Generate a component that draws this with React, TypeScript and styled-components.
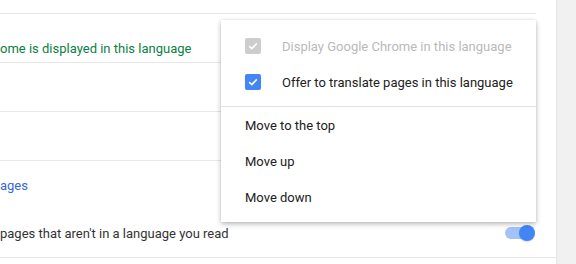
import React from "react";
import styled, { createGlobalStyle } from "styled-components";

const Global = createGlobalStyle`
  html, body { margin: 0; padding: 0; }
  *, *::before, *::after { box-sizing: border-box; }
  body {
    width: 576px;
    height: 264px;
    overflow: hidden;
    background: #f1f1f1;
    font-family: Roboto, "Liberation Sans", Arial, sans-serif;
    font-size: 13px;
    color: #333;
  }
`;

const Page = styled.div`
  display: flex;
  width: 576px;
  height: 264px;
  position: relative;
`;

const Card = styled.div`
  width: 556px;
  height: 264px;
  background: #fff;
  box-shadow: 1px 0 2px rgba(0, 0, 0, 0.06);
  display: flex;
  flex-direction: column;
`;

const Row = styled.div<{ $h: number; $line?: boolean; $full?: boolean; $align?: string }>`
  height: ${(p) => p.$h}px;
  display: flex;
  align-items: ${(p) => p.$align || "center"};
  margin-right: ${(p) => (p.$full ? 0 : 20)}px;
  border-bottom: ${(p) => (p.$line ? "1px solid #e6e6e6" : "none")};
  flex-shrink: 0;
`;

const RowText = styled.span<{ $color?: string; $pb?: number }>`
  color: ${(p) => p.$color || "#333"};
  white-space: nowrap;
  flex: 1;
  padding-bottom: ${(p) => p.$pb || 0}px;
`;

const Toggle = styled.div`
  position: relative;
  width: 30px;
  height: 16px;
  margin-right: 21px;
  flex-shrink: 0;
`;

const Track = styled.div`
  position: absolute;
  left: 0;
  top: 2px;
  width: 26px;
  height: 12px;
  border-radius: 6px;
  background: #a3c2f9;
`;

const Knob = styled.div`
  position: absolute;
  right: 0;
  top: 0;
  width: 16px;
  height: 16px;
  border-radius: 50%;
  background: #4285f4;
  box-shadow: 0 1px 1px rgba(0, 0, 0, 0.15);
`;

const Menu = styled.div`
  position: absolute;
  left: 221px;
  top: 20px;
  width: 315px;
  padding: 8px 0 7px;
  background: #fff;
  box-shadow: 0 2px 5px rgba(0, 0, 0, 0.28), 0 0 2px rgba(0, 0, 0, 0.08);
  display: flex;
  flex-direction: column;
`;

const Item = styled.div<{ $disabled?: boolean }>`
  height: 36px;
  display: flex;
  align-items: center;
  padding-left: 24px;
  color: ${(p) => (p.$disabled ? "#bababa" : "#212121")};
  white-space: nowrap;
`;

const Box = styled.span<{ $disabled?: boolean }>`
  width: 16px;
  height: 16px;
  border-radius: 2px;
  background: ${(p) => (p.$disabled ? "#cdcdcd" : "#4285f4")};
  display: inline-flex;
  align-items: center;
  justify-content: center;
  margin-right: 21px;
  flex-shrink: 0;
`;

const Divider = styled.div`
  height: 1px;
  background: #e2e2e2;
  margin-top: 6px;
`;

const Check = () => (
  <svg width="12" height="12" viewBox="0 0 12 12">
    <path d="M2.2 6.2 L4.8 8.6 L9.8 3.4" fill="none" stroke="#fff" strokeWidth="1.6" />
  </svg>
);

export default function App() {
  return (
    <>
      <Global />
      <Page>
        <Card>
          <Row $h={14} $line />
          <Row $h={49} $line $align="flex-end">
            <RowText $color="#0b8043" $pb={6}>ome is displayed in this language</RowText>
          </Row>
          <Row $h={49} $line />
          <Row $h={49} $line />
          <Row $h={48}>
            <RowText $color="#3367d6">ages</RowText>
          </Row>
          <Row $h={49} $line $full>
            <RowText>pages that aren't in a language you read</RowText>
            <Toggle>
              <Track />
              <Knob />
            </Toggle>
          </Row>
        </Card>
        <Menu>
          <Item $disabled>
            <Box $disabled>
              <Check />
            </Box>
            Display Google Chrome in this language
          </Item>
          <Item>
            <Box>
              <Check />
            </Box>
            Offer to translate pages in this language
          </Item>
          <Divider />
          <Item>Move to the top</Item>
          <Item>Move up</Item>
          <Item>Move down</Item>
        </Menu>
      </Page>
    </>
  );
}
